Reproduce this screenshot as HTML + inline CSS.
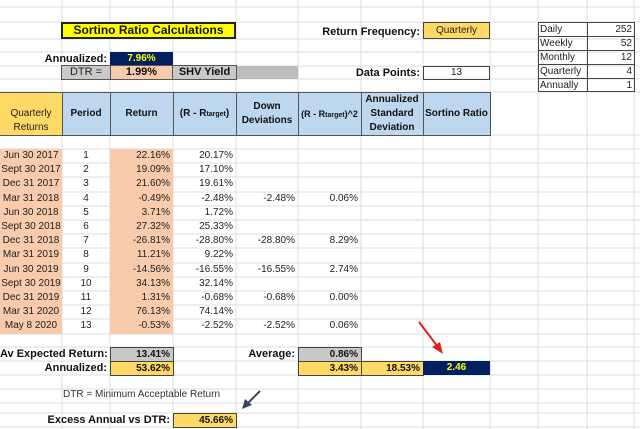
<!DOCTYPE html>
<html><head><meta charset="utf-8"><style>
*{margin:0;padding:0;box-sizing:border-box}
body{width:640px;height:429px;background:#fff;position:relative;overflow:hidden;font-family:"Liberation Sans",Arial,sans-serif;font-size:10px;color:#222}
.a{position:absolute;line-height:14px;white-space:nowrap}
.b{font-weight:bold;color:#111}
.r{text-align:right;padding-right:3px}
.c{text-align:center}
.box{position:absolute;border:1px solid #444}
svg{position:absolute;left:0;top:0}
.l{font-size:11px}
</style></head><body>
<svg width="640" height="429">
<g stroke="#dedede" stroke-width="1">
<line x1="62" y1="0" x2="62" y2="429"/><line x1="110" y1="0" x2="110" y2="429"/><line x1="173" y1="0" x2="173" y2="429"/><line x1="236" y1="0" x2="236" y2="429"/><line x1="298" y1="0" x2="298" y2="429"/><line x1="361" y1="0" x2="361" y2="429"/><line x1="423" y1="0" x2="423" y2="429"/><line x1="490" y1="0" x2="490" y2="429"/><line x1="538" y1="0" x2="538" y2="429"/><line x1="587" y1="0" x2="587" y2="429"/><line x1="634" y1="0" x2="634" y2="429"/>
<line x1="0" y1="7" x2="640" y2="7"/><line x1="0" y1="22" x2="640" y2="22"/><line x1="0" y1="39" x2="640" y2="39"/><line x1="0" y1="52" x2="640" y2="52"/><line x1="0" y1="66" x2="640" y2="66"/><line x1="0" y1="79" x2="640" y2="79"/><line x1="0" y1="92" x2="640" y2="92"/><line x1="0" y1="135" x2="640" y2="135"/>
<line x1="0" y1="149" x2="640" y2="149"/><line x1="0" y1="163" x2="640" y2="163"/><line x1="0" y1="177" x2="640" y2="177"/><line x1="0" y1="192" x2="640" y2="192"/><line x1="0" y1="206" x2="640" y2="206"/><line x1="0" y1="220" x2="640" y2="220"/><line x1="0" y1="234" x2="640" y2="234"/><line x1="0" y1="248" x2="640" y2="248"/><line x1="0" y1="263" x2="640" y2="263"/><line x1="0" y1="277" x2="640" y2="277"/><line x1="0" y1="291" x2="640" y2="291"/><line x1="0" y1="305" x2="640" y2="305"/><line x1="0" y1="319" x2="640" y2="319"/><line x1="0" y1="334" x2="640" y2="334"/><line x1="0" y1="347" x2="640" y2="347"/><line x1="0" y1="361" x2="640" y2="361"/><line x1="0" y1="375" x2="640" y2="375"/><line x1="0" y1="389" x2="640" y2="389"/><line x1="0" y1="403" x2="640" y2="403"/><line x1="0" y1="413" x2="640" y2="413"/><line x1="0" y1="427" x2="640" y2="427"/>
</g>
<rect x="110" y="149" width="63" height="185" fill="#f8cbad"/>
<rect x="0" y="149" width="62" height="185" fill="#f8cbad"/>
</svg>

<div class="box b c" style="left:61px;top:22px;width:175px;height:17px;background:#ffff00;border:2px solid #222;font-size:12px;line-height:13px">Sortino Ratio Calculations</div>

<div class="a b r l" style="left:0;top:52px;width:110px">Annualized:</div>
<div class="a c b" style="left:110px;top:52px;width:63px;height:14px;background:#002060;color:#ffff00">7.96%</div>
<div class="box c" style="left:61px;top:65px;width:176px;height:15px;border-color:#555"></div>
<div class="a c l" style="left:62px;top:66px;width:48px;height:13px;background:#c9c9c9;line-height:13px">DTR =</div>
<div class="a c b l" style="left:110px;top:66px;width:63px;height:13px;background:#f8cbad;line-height:13px;border-left:1px solid #555;border-right:1px solid #555">1.99%</div>
<div class="a c b l" style="left:173px;top:66px;width:63px;height:13px;background:#c9c9c9;line-height:13px">SHV Yield</div>
<div class="a" style="left:237px;top:66px;width:61px;height:13px;background:#bdbdbd"></div>

<div class="a b r l" style="left:300px;top:25px;width:123px">Return Frequency:</div>
<div class="box c" style="left:423px;top:22px;width:67px;height:17px;background:#ffd966;line-height:15px">Quarterly</div>
<div class="a b r l" style="left:300px;top:66px;width:123px">Data Points:</div>
<div class="box c" style="left:423px;top:66px;width:67px;height:14px;line-height:12px">13</div>

<div class="box" style="left:538px;top:22px;width:97px;height:70px"></div>
<div class="a" style="left:587px;top:22px;width:1px;height:70px;background:#444"></div>
<div class="a" style="left:538px;top:36px;width:97px;height:1px;background:#444"></div>
<div class="a" style="left:538px;top:50px;width:97px;height:1px;background:#444"></div>
<div class="a" style="left:538px;top:64px;width:97px;height:1px;background:#444"></div>
<div class="a" style="left:538px;top:78px;width:97px;height:1px;background:#444"></div>
<div class="a" style="left:540px;top:23px">Daily</div><div class="a r" style="left:587px;top:23px;width:48px">252</div>
<div class="a" style="left:540px;top:37px">Weekly</div><div class="a r" style="left:587px;top:37px;width:48px">52</div>
<div class="a" style="left:540px;top:51px">Monthly</div><div class="a r" style="left:587px;top:51px;width:48px">12</div>
<div class="a" style="left:540px;top:65px">Quarterly</div><div class="a r" style="left:587px;top:65px;width:48px">4</div>
<div class="a" style="left:540px;top:79px">Annually</div><div class="a r" style="left:587px;top:79px;width:48px">1</div>

<div class="box" style="left:0;top:92px;width:491px;height:44px;background:#bdd7ee;border-color:#555"></div>
<div class="a" style="left:0;top:93px;width:62px;height:42px;background:#ffd966"></div>
<div class="a c" style="left:0;top:107px;width:62px;line-height:14px">Quarterly<br>Returns</div>
<div class="a" style="left:62px;top:92px;width:1px;height:44px;background:#555"></div>
<div class="a" style="left:110px;top:92px;width:1px;height:44px;background:#555"></div>
<div class="a" style="left:173px;top:92px;width:1px;height:44px;background:#555"></div>
<div class="a" style="left:236px;top:92px;width:1px;height:44px;background:#555"></div>
<div class="a" style="left:298px;top:92px;width:1px;height:44px;background:#555"></div>
<div class="a" style="left:361px;top:92px;width:1px;height:44px;background:#555"></div>
<div class="a" style="left:423px;top:92px;width:1px;height:44px;background:#555"></div>
<div class="a b c" style="left:62px;top:107px;width:48px">Period</div>
<div class="a b c" style="left:110px;top:107px;width:63px">Return</div>
<div class="a b c" style="left:173px;top:107px;width:63px">(R - R<span style="font-size:7px">target</span>)</div>
<div class="a b c" style="left:236px;top:100px;width:62px">Down<br>Deviations</div>
<div class="a b c" style="left:298px;top:107px;width:63px;font-size:9px">(R - R<span style="font-size:7px">target</span>)^2</div>
<div class="a b c" style="left:361px;top:93px;width:62px">Annualized<br>Standard<br>Deviation</div>
<div class="a b c" style="left:423px;top:107px;width:67px">Sortino Ratio</div>

<div class="a c" style="left:0;top:149px;width:62px;line-height:14.2px">Jun 30 2017<br>Sept 30 2017<br>Dec 31 2017<br>Mar 31 2018<br>Jun 30 2018<br>Sept 30 2018<br>Dec 31 2018<br>Mar 31 2019<br>Jun 30 2019<br>Sept 30 2019<br>Dec 31 2019<br>Mar 31 2020<br>May 8 2020</div>
<div class="a c" style="left:62px;top:149px;width:48px;line-height:14.2px">1<br>2<br>3<br>4<br>5<br>6<br>7<br>8<br>9<br>10<br>11<br>12<br>13</div>
<div class="a r" style="left:110px;top:149px;width:63px;line-height:14.2px">22.16%<br>19.09%<br>21.60%<br>-0.49%<br>3.71%<br>27.32%<br>-26.81%<br>11.21%<br>-14.56%<br>34.13%<br>1.31%<br>76.13%<br>-0.53%</div>
<div class="a r" style="left:173px;top:149px;width:63px;line-height:14.2px">20.17%<br>17.10%<br>19.61%<br>-2.48%<br>1.72%<br>25.33%<br>-28.80%<br>9.22%<br>-16.55%<br>32.14%<br>-0.68%<br>74.14%<br>-2.52%</div>
<div class="a r" style="left:236px;top:149px;width:62px;line-height:14.2px"><br><br><br>-2.48%<br><br><br>-28.80%<br><br>-16.55%<br><br>-0.68%<br><br>-2.52%</div>
<div class="a r" style="left:298px;top:149px;width:63px;line-height:14.2px"><br><br><br>0.06%<br><br><br>8.29%<br><br>2.74%<br><br>0.00%<br><br>0.06%</div>

<div class="a b r l" style="left:0;top:347px;width:110px">Av Expected Return:</div>
<div class="box b r" style="left:110px;top:347px;width:64px;height:15px;background:#c9c9c9;line-height:13px">13.41%</div>
<div class="a b r l" style="left:0;top:361px;width:110px">Annualized:</div>
<div class="box b r" style="left:110px;top:361px;width:64px;height:15px;background:#ffd966;line-height:13px">53.62%</div>
<div class="a b r l" style="left:200px;top:347px;width:98px">Average:</div>
<div class="box b r" style="left:298px;top:347px;width:64px;height:15px;background:#c9c9c9;line-height:13px">0.86%</div>
<div class="box b r" style="left:298px;top:361px;width:64px;height:15px;background:#ffd966;line-height:13px">3.43%</div>
<div class="box b r" style="left:361px;top:361px;width:63px;height:15px;background:#ffd966;line-height:13px">18.53%</div>
<div class="a b c" style="left:423px;top:361px;width:67px;height:14px;background:#002060;color:#ffff00">2.46</div>
<div class="a" style="left:63px;top:388px;color:#333">DTR = Minimum Acceptable Return</div>
<div class="a b r l" style="left:0;top:413px;width:173px">Excess Annual vs DTR:</div>
<div class="box b r" style="left:173px;top:413px;width:64px;height:15px;background:#ffd966;line-height:13px">45.66%</div>

<svg width="640" height="429" style="pointer-events:none">
<line x1="419" y1="322" x2="438" y2="347" stroke="#e32020" stroke-width="2"/>
<polygon points="443,354 432,347 440,342" fill="#e32020"/>
<line x1="260" y1="391" x2="248" y2="403" stroke="#3a4658" stroke-width="2"/>
<polygon points="242,409 245,399 252,405" fill="#3a4658"/>
</svg>
</body></html>
